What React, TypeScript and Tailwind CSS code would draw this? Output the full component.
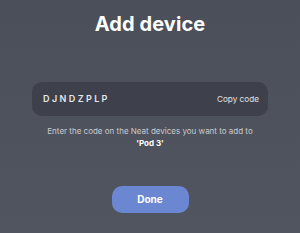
import React from "react";

export default function App() {
  return (
    <div
      className="w-[300px] h-[233px] overflow-hidden bg-gradient-to-b from-[#4b4f59] to-[#51555f] flex flex-col items-center"
      style={{ fontFamily: "Inter, 'Noto Sans', sans-serif" }}
    >
      <h1 className="mt-[11px] text-[20px] leading-[26px] font-bold text-white tracking-[0.1px]">
        Add device
      </h1>
      <div className="mt-[45px] w-[236px] h-[34px] rounded-[10px] bg-[#3e414b] flex items-center justify-between pl-[11px] pr-[9px]">
        <span className="text-[9px] font-semibold text-[#e6e7ea] tracking-[2.4px]">DJNDZPLP</span>
        <span className="text-[8.2px] text-[#e0e1e4]">Copy code</span>
      </div>
      <p className="mt-[9px] text-[8px] leading-[12px] text-[#c9cbd0] text-center">
        Enter the code on the Neat devices you want to add to
        <br />
        <span className="font-bold text-white">'Pod 3'</span>
      </p>
      <button className="mt-[37px] w-[77px] h-[27px] rounded-[10px] bg-[#6b87d2] text-white text-[10px] font-bold">
        Done
      </button>
    </div>
  );
}
